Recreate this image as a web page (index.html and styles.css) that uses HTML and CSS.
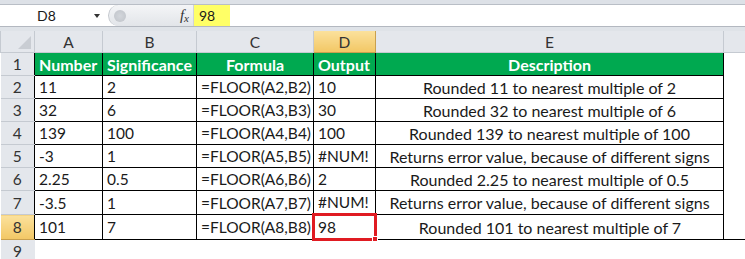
FILE: index.html
```html
<!DOCTYPE html>
<html lang="en">
  <head>
    <meta charset="UTF-8" />
    <title>FLOOR</title>
    <link rel="stylesheet" href="styles.css">
  </head>
  <body>
    <!-- RIBBON + FORMULA BAR -->
    <div class="ribbon"></div>
    <div class="formelbar">
      <div class="navnefelt">
        <span>D8</span>
        <span class="pil"></span>
      </div>
      <div class="deler">
        <span class="knap"></span>
        <span class="fx"><i>f</i><i class="x">x</i></span>
      </div>
      <div class="formel">98</div>
    </div>
    <div class="mellemrum"></div>

    <!-- ARK -->
    <table class="ark">
      <colgroup>
        <col class="c-rh">
        <col class="c-a">
        <col class="c-b">
        <col class="c-c">
        <col class="c-d">
        <col class="c-e">
        <col>
      </colgroup>
      <tr class="kolonner">
        <th class="hjorne"><span class="trekant"></span></th>
        <th>A</th>
        <th>B</th>
        <th>C</th>
        <th class="aktiv">D</th>
        <th>E</th>
        <th class="tom"></th>
      </tr>
      <tr class="overskrift">
        <th class="rk">1</th>
        <td>Number</td>
        <td>Significance</td>
        <td class="midt">Formula</td>
        <td>Output</td>
        <td class="midt">Description</td>
        <td class="fri"></td>
      </tr>
      <tr>
        <th class="rk">2</th>
        <td>11</td><td>2</td><td>=FLOOR(A2,B2)</td><td>10</td>
        <td class="midt">Rounded 11 to nearest multiple of 2</td>
        <td class="fri"></td>
      </tr>
      <tr>
        <th class="rk">3</th>
        <td>32</td><td>6</td><td>=FLOOR(A3,B3)</td><td>30</td>
        <td class="midt">Rounded 32 to nearest multiple of 6</td>
        <td class="fri"></td>
      </tr>
      <tr>
        <th class="rk">4</th>
        <td>139</td><td>100</td><td>=FLOOR(A4,B4)</td><td>100</td>
        <td class="midt">Rounded 139 to nearest multiple of 100</td>
        <td class="fri"></td>
      </tr>
      <tr>
        <th class="rk">5</th>
        <td>-3</td><td>1</td><td>=FLOOR(A5,B5)</td><td>#NUM!</td>
        <td class="midt">Returns error value, because of different signs</td>
        <td class="fri"></td>
      </tr>
      <tr>
        <th class="rk">6</th>
        <td>2.25</td><td>0.5</td><td>=FLOOR(A6,B6)</td><td>2</td>
        <td class="midt">Rounded 2.25 to nearest multiple of 0.5</td>
        <td class="fri"></td>
      </tr>
      <tr>
        <th class="rk">7</th>
        <td>-3.5</td><td>1</td><td>=FLOOR(A7,B7)</td><td>#NUM!</td>
        <td class="midt">Returns error value, because of different signs</td>
        <td class="fri"></td>
      </tr>
      <tr>
        <th class="rk aktiv">8</th>
        <td>101</td><td>7</td><td>=FLOOR(A8,B8)</td>
        <td class="valgt">98<span class="hank"></span></td>
        <td class="midt">Rounded 101 to nearest multiple of 7</td>
        <td class="fri"></td>
      </tr>
      <tr class="tomraekke">
        <th class="rk">9</th>
        <td></td><td></td><td></td><td></td><td></td><td></td>
      </tr>
    </table>
  </body>
</html>
```

FILE: styles.css
```css
body {
  margin: 0;
  width: 745px;
  height: 259px;
  overflow: hidden;
  background-color: #ffffff;
  font-family: Lato, "Open Sans", sans-serif;
  color: #1a1a1a;
}
.ribbon {
  height: 4px;
  background-color: #dde1e7;
  border-bottom: 1px solid #b9bec6;
}
.formelbar {
  display: flex;
  height: 21px;
  border-bottom: 1px solid #b3b8c0;
  background-color: #ffffff;
}
.navnefelt {
  width: 108px;
  display: flex;
  align-items: center;
  justify-content: space-between;
  padding: 0 8px 0 37px;
  box-sizing: border-box;
  font-size: 14px;
}
.pil {
  width: 0;
  height: 0;
  border-left: 3px solid transparent;
  border-right: 3px solid transparent;
  border-top: 4px solid #333;
  margin-top: 1px;
}
.deler {
  width: 86px;
  background: linear-gradient(#f4f5f7, #e2e5e9);
  border-left: 1px solid #c3c7cd;
  border-right: 1px solid #d0d3d8;
  border-radius: 12px 0 0 12px;
  display: flex;
  align-items: center;
  justify-content: space-between;
  padding: 0 4px 0 5px;
  box-sizing: border-box;
}
.knap {
  width: 12px;
  height: 12px;
  border-radius: 50%;
  background: radial-gradient(#d3d6db, #bfc3c9);
}
.fx {
  display: flex;
  align-items: center;
  font-family: "Liberation Serif", serif;
  font-size: 15px;
  color: #333;
}
.fx .x {
  font-size: 11px;
  margin-top: 4px;
}
.formel {
  width: 36px;
  background-color: #ffff66;
  font-size: 14px;
  display: flex;
  align-items: center;
  padding-left: 5px;
  box-sizing: border-box;
}
.mellemrum {
  height: 4px;
  background-color: #dfe3e8;
}
.ark {
  border-collapse: collapse;
  table-layout: fixed;
  width: 745px;
  font-size: 15.5px;
}
.c-rh { width: 34px; }
.c-a { width: 68px; }
.c-b { width: 94px; }
.c-c { width: 117px; }
.c-d { width: 62px; }
.c-e { width: 348px; }
.ark th {
  background-color: #e4e7ec;
  font-weight: normal;
  font-size: 15.5px;
  color: #333;
  border: 1px solid #c5cad1;
  padding: 0;
  text-align: center;
}
.kolonner th {
  height: 21px;
  border-top: none;
}
.ark th.rk {
  border-right: none;
  border-left: none;
  height: 22px;
}
.ark th.aktiv {
  background: linear-gradient(#fbe19c, #f2c765);
  border-color: #c9a04e;
}
.ark th.tom {
  border-right: none;
}
.hjorne {
  position: relative;
}
.trekant {
  position: absolute;
  right: 3px;
  bottom: 3px;
  width: 0;
  height: 0;
  border-left: 13px solid transparent;
  border-bottom: 13px solid #c9cdd3;
}
.ark td {
  border: 1px solid #000;
  padding: 0 0 0 4px;
  height: 22px;
  white-space: nowrap;
  overflow: hidden;
}
.ark td.midt {
  text-align: center;
  padding: 0;
  font-size: 16px;
}
.ark td.fri {
  border-top: none;
  border-bottom: none;
  border-right: none;
}
.overskrift td {
  background-color: #00a950;
  color: #ffffff;
  font-weight: bold;
  font-size: 16px;
  border-top: none;
}
.overskrift td.fri {
  background-color: #ffffff;
}
.tomraekke td {
  border-left: none;
  border-right: none;
  border-bottom: none;
}
.ark td.valgt {
  border: 3px solid #e01b22;
  padding-left: 3px;
  position: relative;
  overflow: visible;
}
.hank {
  position: absolute;
  right: -4px;
  bottom: -4px;
  width: 4px;
  height: 4px;
  background-color: #e01b22;
  border: 1px solid #fff;
}
```
